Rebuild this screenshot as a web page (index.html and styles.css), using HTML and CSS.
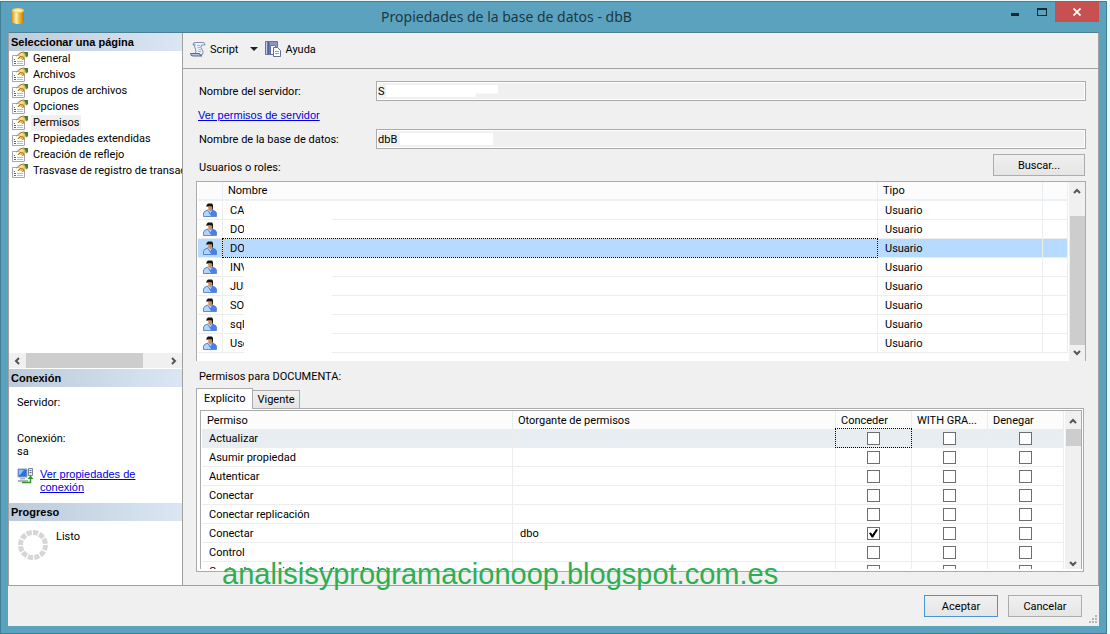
FILE: index.html
```html
<!DOCTYPE html>
<html lang="es">
<head>
    <meta charset="UTF-8">
    <meta name="viewport" content="width=device-width, initial-scale=1.0">
    <title>Propiedades de la base de datos - dbB</title>
    <link rel="stylesheet" href="styles.css">
</head>
<body>
    <!-- Iconos compartidos -->
    <svg class="sprite" aria-hidden="true">
        <symbol id="icon-page" viewBox="0 0 16 16">
            <path d="M.5 4.500h12v10H.5z" fill="#fff" stroke="#a3a9b4"/>
            <path d="M2 8.500h1M2 10.500h2M2 12.500h2" stroke="#4b66c8"/>
            <path d="M5 10.500h6M5 12.500h6" stroke="#b4bdd8"/>
            <path d="M4.500 5L8 2l3-1 3 1 .500 3.500L12 7l-1.500 2L8 7.500 5.500 8 7 5z" fill="#f0c04c"/>
            <path d="M4.500 5L8 2l3-1 2 .500M6 8l3-3 3 2-1.500 2" fill="none" stroke="#8a6c28" stroke-width=".8"/>
            <path d="M7 4l3-2 2 2-2 1z" fill="#ffe48c"/>
            <path d="M12 1h4v4l-1.500 1.500z" fill="#4c7a44"/>
        </symbol>
        <symbol id="icon-user" viewBox="0 0 14 14">
            <path d="M.5 13.500V10q.5-2 4-3h5q3.500 1 4 3v3.500z" fill="#4a80ee" stroke="#3464c8" stroke-width=".6"/>
            <path d="M1 13V10q.5-1.500 3.500-2.500L8 13z" fill="#b4d4ff"/>
            <path d="M5 7h4l-1.500 3z" fill="#eef5ff"/>
            <path d="M5 3h4.500v3.500L8 8.500H7L5.500 6.500z" fill="#c4905c"/>
            <path d="M3.500 4V2L5 .5h4L10 2v4l-.8 1L9 3.500 6 3z" fill="#17130f"/>
        </symbol>
        <symbol id="icon-up" viewBox="0 0 8 6"><path d="M1 5l3-3 3 3" fill="none" stroke="#555" stroke-width="2"/></symbol>
        <symbol id="icon-down" viewBox="0 0 8 6"><path d="M1 1l3 3 3-3" fill="none" stroke="#555" stroke-width="2"/></symbol>
        <symbol id="icon-left" viewBox="0 0 6 8"><path d="M5 1L2 4l3 3" fill="none" stroke="#555" stroke-width="2"/></symbol>
        <symbol id="icon-right" viewBox="0 0 6 8"><path d="M1 1l3 3-3 3" fill="none" stroke="#555" stroke-width="2"/></symbol>
    </svg>

    <div class="window">
        <header class="titlebar">
            <svg class="db-icon" width="12" height="16" viewBox="0 0 12 16">
                <defs>
                    <linearGradient id="gold"><stop offset="0" stop-color="#d89a16"/><stop offset=".35" stop-color="#fff0b0"/><stop offset=".6" stop-color="#f0bc3c"/><stop offset="1" stop-color="#b87a0c"/></linearGradient>
                </defs>
                <path d="M0 2.500v11C0 15 3 16 6 16s6-1 6-2.500v-11z" fill="url(#gold)"/>
                <ellipse cx="6" cy="2.500" rx="6" ry="2.500" fill="#f4d060"/>
                <ellipse cx="6" cy="2.500" rx="4" ry="1.300" fill="#fff0b8"/>
            </svg>
            <h1>Propiedades de la base de datos - dbB</h1>
            <button type="button" class="win-btn" aria-label="Minimizar"><span class="min-mark"></span></button>
            <button type="button" class="win-btn" aria-label="Maximizar"><span class="max-mark"></span></button>
            <button type="button" class="win-btn win-close" aria-label="Cerrar">
                <svg width="8" height="8" viewBox="0 0 8 8"><path d="M.5.5l7 7M7.500.5l-7 7" stroke="#fff" stroke-width="1.800"/></svg>
            </button>
        </header>

        <div class="client">
            <aside class="sidebar">
                <h2>Seleccionar una página</h2>
                <ul class="pages">
                    <li><svg><use href="#icon-page"/></svg><span>General</span></li>
                    <li><svg><use href="#icon-page"/></svg><span>Archivos</span></li>
                    <li><svg><use href="#icon-page"/></svg><span>Grupos de archivos</span></li>
                    <li><svg><use href="#icon-page"/></svg><span>Opciones</span></li>
                    <li class="active"><svg><use href="#icon-page"/></svg><span>Permisos</span></li>
                    <li><svg><use href="#icon-page"/></svg><span>Propiedades extendidas</span></li>
                    <li><svg><use href="#icon-page"/></svg><span>Creación de reflejo</span></li>
                    <li><svg><use href="#icon-page"/></svg><span>Trasvase de registro de transacciones</span></li>
                </ul>
                <div class="hscroll">
                    <svg width="6" height="8"><use href="#icon-left"/></svg>
                    <div class="hthumb"></div>
                    <svg width="6" height="8"><use href="#icon-right"/></svg>
                </div>

                <h2>Conexión</h2>
                <div class="connection">
                    <p class="server">Servidor:</p>
                    <p>Conexión:</p>
                    <p>sa</p>
                    <div class="conn-link">
                        <svg width="17" height="16" viewBox="0 0 17 16">
                            <path d="M1 1h9v8H1z" fill="#2f6fd8" stroke="#8fa4c4"/>
                            <path d="M2 2h5L3 7H2z" fill="#8cc0ff"/>
                            <path d="M3 10h5v1.500H3zM1 12h10v2H1z" fill="#aab4c4"/>
                            <path d="M11.500.5h4v7h-4z" fill="#e4e8ee" stroke="#7d8797"/>
                            <path d="M12.500 2.500h2M12.500 4.500h2" stroke="#687080"/>
                            <path d="M5 14.500h8.500V10" fill="none" stroke="#2f9a20" stroke-width="1.500"/>
                            <path d="M10.500 11l3-3.500 3 3.500z" fill="#2f9a20"/>
                        </svg>
                        <a href="#">Ver propiedades de conexión</a>
                    </div>
                </div>

                <h2>Progreso</h2>
                <div class="progress">
                    <svg width="30" height="30" viewBox="0 0 30 30">
                        <circle cx="15" cy="15" r="12.500" fill="none" stroke="#d6d6d6" stroke-width="5" pathLength="120" stroke-dasharray="8 2"/>
                    </svg>
                    <span>Listo</span>
                </div>
            </aside>

            <main class="main">
                <div class="toolbar">
                    <button type="button" class="tool">
                        <svg width="16" height="16" viewBox="0 0 16 16">
                            <path d="M4.500 1.500H13q2 0 2 2.500h-3.500q-1.500 2 .5 4.500t.5 5H3.500q4-2 2-5.500T4.500 1.500z" fill="#eaf1fb" stroke="#7f90b4"/>
                            <path d="M5 1.500q-2.500.5-2 2.500h2.500" fill="#c6d4ea" stroke="#7f90b4"/>
                            <path d="M.5 12.500h9q0 2.500 2.500 2.500H3Q.5 15 .5 12.500z" fill="#b8c6de" stroke="#5a6a8c"/>
                            <path d="M7 4.500h3M7.500 6.500h3M8.500 8.500h3M8 10.500h3" stroke="#a6b8d8"/>
                        </svg>
                        <span>Script</span>
                        <i class="caret"></i>
                    </button>
                    <button type="button" class="tool">
                        <svg width="16" height="16" viewBox="0 0 16 16">
                            <path d="M.5.5h12v13H.5z" fill="#8c98c4" stroke="#6672a4"/>
                            <path d="M3.500 1v12" stroke="#525e94" stroke-width="2"/>
                            <path d="M1.500 1v12" stroke="#c4cee8"/>
                            <path d="M5.500 4.500h4l2 2v7h-6z" fill="#f4f7ff" stroke="#61719c"/>
                            <path d="M8.500 6.500h4l3 3v6h-7z" fill="#fff" stroke="#61719c"/>
                            <path d="M10 10.500h4M10 12.500h4" stroke="#8f9dc4"/>
                        </svg>
                        <span>Ayuda</span>
                    </button>
                </div>

                <form class="content">
                    <div class="field">
                        <label for="server-name">Nombre del servidor:</label>
                        <div class="field-box">
                            <input type="text" id="server-name" value="S" readonly>
                            <span class="blank blank-server"></span>
                        </div>
                    </div>
                    <a href="#" class="perm-link">Ver permisos de servidor</a>
                    <div class="field">
                        <label for="db-name">Nombre de la base de datos:</label>
                        <div class="field-box">
                            <input type="text" id="db-name" value="dbB" readonly>
                            <span class="blank blank-db"></span>
                        </div>
                    </div>

                    <div class="users-head">
                        <span id="users-label">Usuarios o roles:</span>
                        <button type="button" class="btn btn-search">Buscar...</button>
                    </div>
                    <div class="list users">
                        <table aria-labelledby="users-label">
                            <colgroup><col class="c-icon"><col><col class="c-type"><col class="c-rest"></colgroup>
                            <thead>
                                <tr><th></th><th>Nombre</th><th>Tipo</th><th></th></tr>
                            </thead>
                            <tbody>
                                <tr><td><svg><use href="#icon-user"/></svg></td><td><span class="name">CA</span><i class="erased"></i></td><td>Usuario</td><td></td></tr>
                                <tr><td><svg><use href="#icon-user"/></svg></td><td><span class="name">DO</span><i class="erased"></i></td><td>Usuario</td><td></td></tr>
                                <tr class="selected"><td><svg><use href="#icon-user"/></svg></td><td><span class="name">DO</span></td><td>Usuario</td><td></td></tr>
                                <tr><td><svg><use href="#icon-user"/></svg></td><td><span class="name">INV</span><i class="erased"></i></td><td>Usuario</td><td></td></tr>
                                <tr><td><svg><use href="#icon-user"/></svg></td><td><span class="name">JUS</span><i class="erased"></i></td><td>Usuario</td><td></td></tr>
                                <tr><td><svg><use href="#icon-user"/></svg></td><td><span class="name">SO</span><i class="erased"></i></td><td>Usuario</td><td></td></tr>
                                <tr><td><svg><use href="#icon-user"/></svg></td><td><span class="name">sqls</span><i class="erased"></i></td><td>Usuario</td><td></td></tr>
                                <tr><td><svg><use href="#icon-user"/></svg></td><td><span class="name">Use</span><i class="erased"></i></td><td>Usuario</td><td></td></tr>
                            </tbody>
                        </table>
                        <div class="vscroll">
                            <svg width="8" height="6"><use href="#icon-up"/></svg>
                            <div class="vthumb"></div>
                            <svg width="8" height="6"><use href="#icon-down"/></svg>
                        </div>
                    </div>

                    <p class="perms-label" id="perms-label">Permisos para DOCUMENTA:</p>
                    <div class="tabs">
                        <button type="button" class="tab active">Explícito</button>
                        <button type="button" class="tab">Vigente</button>
                    </div>
                    <div class="tab-pane">
                        <div class="list perms">
                            <table aria-labelledby="perms-label">
                                <colgroup><col class="c-perm"><col><col class="c-check"><col class="c-check"><col class="c-check"></colgroup>
                                <thead>
                                    <tr><th>Permiso</th><th>Otorgante de permisos</th><th>Conceder</th><th>WITH GRA...</th><th>Denegar</th></tr>
                                </thead>
                                <tbody>
                                    <tr class="current"><td>Actualizar</td><td></td><td class="focus"><input type="checkbox" aria-label="Conceder Actualizar"></td><td><input type="checkbox" aria-label="WITH GRANT Actualizar"></td><td><input type="checkbox" aria-label="Denegar Actualizar"></td></tr>
                                    <tr><td>Asumir propiedad</td><td></td><td><input type="checkbox" aria-label="Conceder Asumir propiedad"></td><td><input type="checkbox" aria-label="WITH GRANT Asumir propiedad"></td><td><input type="checkbox" aria-label="Denegar Asumir propiedad"></td></tr>
                                    <tr><td>Autenticar</td><td></td><td><input type="checkbox" aria-label="Conceder Autenticar"></td><td><input type="checkbox" aria-label="WITH GRANT Autenticar"></td><td><input type="checkbox" aria-label="Denegar Autenticar"></td></tr>
                                    <tr><td>Conectar</td><td></td><td><input type="checkbox" aria-label="Conceder Conectar"></td><td><input type="checkbox" aria-label="WITH GRANT Conectar"></td><td><input type="checkbox" aria-label="Denegar Conectar"></td></tr>
                                    <tr><td>Conectar replicación</td><td></td><td><input type="checkbox" aria-label="Conceder Conectar replicación"></td><td><input type="checkbox" aria-label="WITH GRANT Conectar replicación"></td><td><input type="checkbox" aria-label="Denegar Conectar replicación"></td></tr>
                                    <tr><td>Conectar</td><td>dbo</td><td><input type="checkbox" aria-label="Conceder Conectar (dbo)" checked></td><td><input type="checkbox" aria-label="WITH GRANT Conectar (dbo)"></td><td><input type="checkbox" aria-label="Denegar Conectar (dbo)"></td></tr>
                                    <tr><td>Control</td><td></td><td><input type="checkbox" aria-label="Conceder Control"></td><td><input type="checkbox" aria-label="WITH GRANT Control"></td><td><input type="checkbox" aria-label="Denegar Control"></td></tr>
                                    <tr><td>Copia de seguridad de la base de datos</td><td></td><td><input type="checkbox" aria-label="Conceder Copia de seguridad"></td><td><input type="checkbox" aria-label="WITH GRANT Copia de seguridad"></td><td><input type="checkbox" aria-label="Denegar Copia de seguridad"></td></tr>
                                </tbody>
                            </table>
                            <div class="vscroll">
                                <svg width="8" height="6"><use href="#icon-up"/></svg>
                                <div class="vthumb"></div>
                                <svg width="8" height="6"><use href="#icon-down"/></svg>
                            </div>
                        </div>
                        <div class="watermark">analisisyprogramacionoop.blogspot.com.es</div>
                    </div>
                </form>
            </main>
        </div>

        <footer class="footer">
            <button type="button" class="btn btn-default">Aceptar</button>
            <button type="button" class="btn">Cancelar</button>
            <svg class="grip" width="9" height="9" viewBox="0 0 9 9">
                <path d="M6 0h2v2H6zM3 3h2v2H3zM6 3h2v2H6zM0 6h2v2H0zM3 6h2v2H3zM6 6h2v2H6z" fill="#b8b8b8"/>
            </svg>
        </footer>
    </div>
</body>
</html>
```

FILE: styles.css
```css
* {
    box-sizing: border-box;
}
body {
    margin: 0;
    padding: 1px 3px 1px 0;
    background: #e9f8fb;
    font-family: Roboto, "Liberation Sans", Arial, sans-serif;
    font-size: 11px;
    line-height: 13px;
    color: #000;
}
p, h1, h2, ul {
    margin: 0;
    padding: 0;
}
button, input {
    font: inherit;
    color: inherit;
}
a {
    color: #0000e0;
    font-family: "Liberation Sans", Arial, sans-serif;
}
.sprite {
    position: absolute;
    width: 0;
    height: 0;
}

/* Ventana */
.window {
    border: 1px solid #417e96;
    background: #5ba2bf;
    padding: 0 7px 7px;
}
.titlebar {
    display: flex;
    height: 30px;
    padding-left: 4px;
    align-items: flex-start;
}
.db-icon {
    margin-top: 6px;
}
.titlebar h1 {
    flex: 1;
    padding: 5px 12px 0 0;
    font-family: "Noto Sans", "Open Sans", sans-serif;
    font-size: 14px;
    font-weight: normal;
    line-height: 20px;
    text-align: center;
    color: #1d3843;
}
.win-btn {
    display: flex;
    width: 27px;
    height: 20px;
    padding: 0;
    border: none;
    background: none;
    align-items: center;
    justify-content: center;
}
.win-close {
    width: 44px;
    background: #c75050;
}
.min-mark {
    width: 8px;
    height: 3px;
    margin-top: 4px;
    background: #1b2a30;
}
.max-mark {
    width: 10px;
    height: 8px;
    border: 1px solid #1b2a30;
    border-top-width: 2px;
}

.client {
    display: flex;
    border: 1px solid #a0a0a0;
    border-top-color: #4a7f93;
    background: #f0f0f0;
}

/* Panel izquierdo */
.sidebar {
    display: flex;
    flex-direction: column;
    width: 174px;
    flex-shrink: 0;
    border-right: 1px solid #a0a0a0;
    background: #fff;
}
.sidebar h2 {
    height: 18px;
    padding-left: 2px;
    background: linear-gradient(to right, #bccbda, #dae6f3);
    font-family: "Liberation Sans", Arial, sans-serif;
    font-size: 11px;
    line-height: 18px;
    white-space: nowrap;
}
.pages {
    flex: 1;
    overflow: hidden;
    list-style: none;
}
.pages li {
    display: flex;
    height: 16px;
    padding-left: 3px;
    line-height: 16px;
    white-space: nowrap;
}
.pages svg {
    width: 16px;
    height: 16px;
    margin-right: 3px;
    flex-shrink: 0;
}
.pages span {
    padding: 0 2px;
}
.pages .active span {
    background: #f0f0f0;
}
.hscroll {
    display: flex;
    height: 15px;
    margin-bottom: 1px;
    padding: 0 5px;
    align-items: center;
    justify-content: space-between;
    background: #f0f0f0;
}
.hthumb {
    width: 117px;
    height: 15px;
    margin-right: 22px;
    background: #cdcdcd;
}
.connection {
    height: 116px;
    padding: 9px 8px;
}
.server {
    margin-bottom: 23px;
}
.conn-link {
    display: flex;
    gap: 6px;
    margin-top: 10px;
}
.conn-link a {
    flex: 1;
}
.conn-link svg {
    flex-shrink: 0;
}
.progress {
    display: flex;
    gap: 8px;
    height: 64px;
    padding: 9px;
}

/* Barra de herramientas */
.main {
    flex: 1;
    min-width: 0;
}
.toolbar {
    display: flex;
    gap: 7px;
    height: 36px;
    padding: 0 7px 3px;
    align-items: center;
    border-bottom: 1px solid #a0a0a0;
}
.tool {
    display: flex;
    gap: 4px;
    padding: 0;
    border: none;
    background: none;
    align-items: center;
}
.caret {
    margin-left: 8px;
    border: 4px solid transparent;
    border-top-color: #222;
    border-bottom: none;
}

/* Contenido */
.content {
    padding: 12px 12px 13px 13px;
}
.field {
    display: flex;
    padding-left: 3px;
    align-items: center;
}
.field label {
    width: 177px;
}
.field-box {
    position: relative;
    flex: 1;
}
.field input {
    display: block;
    width: 100%;
    height: 20px;
    padding: 0 1px;
    border: 1px solid #ababab;
    outline: none;
    background: #f0f0f0;
    box-shadow: inset 0 0 0 1px #fff;
}
.blank {
    position: absolute;
    top: 4px;
    height: 12px;
    background: #fff;
}
.blank-server {
    left: 10px;
    width: 112px;
    clip-path: polygon(0 0, 100% 0, 100% 70%, 80% 70%, 80% 100%, 0 100%);
}
.blank-db {
    left: 24px;
    width: 93px;
}
.perm-link {
    display: block;
    width: max-content;
    margin: 8px 0 7px 2px;
    font-size: 11px;
}
.users-head {
    display: flex;
    margin: 5px 1px 5px 3px;
    justify-content: space-between;
    align-items: center;
}
.users-head span {
    padding-top: 5px;
}
.btn {
    width: 74px;
    height: 22px;
    padding: 0;
    border: 1px solid #acacac;
    background: linear-gradient(#f0f0f0, #e5e5e5);
}
.btn-search {
    width: 92px;
}
.btn-default {
    border-color: #4a94dc;
}

/* Listas */
.list {
    display: flex;
    gap: 1px;
    overflow: hidden;
    background: #fff;
    border: 1px solid #ababab;
    border-bottom: none;
    padding-left: 1px;
}
.list table {
    flex: 1;
    align-self: flex-start;
    table-layout: fixed;
    border-spacing: 0;
}
.list th {
    height: 18px;
    padding: 0 5px;
    border-right: 1px solid #e6edf5;
    background: #fcfcfc;
    font-weight: normal;
    text-align: left;
    white-space: nowrap;
}
.list td {
    position: relative;
    height: 19px;
    padding: 0 7px;
    border-right: 1px solid #ededed;
    border-bottom: 1px solid #ededed;
    white-space: nowrap;
}
.users {
    height: 180px;
}
.users th {
    height: 19px;
    border-bottom: 2px solid #edf1f5;
}
.users td:first-child {
    padding: 0 0 0 5px;
}
.users td svg {
    display: block;
    width: 14px;
    height: 14px;
}
.c-icon {
    width: 25px;
}
.c-type {
    width: 165px;
}
.c-rest {
    width: 25px;
}
.name {
    display: block;
    width: 14px;
    overflow: hidden;
}
/* zona en blanco detrás del nombre recortado */
.erased {
    position: absolute;
    top: 0;
    bottom: -1px;
    left: 21px;
    width: 88px;
    background: #fff;
}
.selected td {
    background: #b7dbff;
}
.selected td:nth-child(2)::after,
.focus::after {
    content: "";
    position: absolute;
    inset: -1px;
    border: 1px dotted #000;
}
.vscroll {
    display: flex;
    flex-direction: column;
    width: 16px;
    padding: 6px 0 5px;
    align-items: center;
    justify-content: space-between;
    background: #f0f0f0;
}
.vthumb {
    width: 15px;
    height: 129px;
    margin-top: 16px;
    background: #cdcdcd;
}

/* Pestañas */
.perms-label {
    margin: 9px 3px 5px;
}
.tabs {
    display: flex;
    align-items: flex-end;
}
.tab {
    height: 18px;
    padding: 0 4px;
    border: 1px solid #acacac;
    border-left: none;
    border-bottom: none;
    background: linear-gradient(#f0f0f0, #e5e5e5);
}
.tab.active {
    height: 21px;
    margin-bottom: -1px;
    padding: 0 7px 1px;
    border-left: 1px solid #acacac;
    background: #fff;
    z-index: 1;
}
.tab-pane {
    position: relative;
    z-index: 0;
    margin-right: 2px;
    padding: 1px 1px 2px 3px;
    border: 1px solid #acacac;
    background: #fff;
}
.perms {
    height: 159px;
}
.perms .vscroll {
    padding: 7px 0 2px;
}
.perms .vthumb {
    height: 17px;
    margin: 0 0 110px;
}
.c-perm {
    width: 311px;
}
.c-check {
    width: 76px;
}
.current td {
    background: #e8edf1;
}
.perms td:nth-child(n+3) {
    padding: 0;
}
.perms input {
    appearance: none;
    display: block;
    width: 13px;
    height: 13px;
    margin: 1px auto 0;
    border: 1px solid #6e6e6e;
    background: #fff;
}
.perms input:checked::before {
    content: "";
    display: block;
    width: 9px;
    height: 9px;
    margin: 1px;
    background: #000;
    clip-path: polygon(0 45%, 20% 40%, 38% 60%, 80% 0, 100% 8%, 45% 95%, 30% 95%);
}
.watermark {
    position: absolute;
    top: 149px;
    left: 25px;
    font-family: "Liberation Sans", Arial, sans-serif;
    font-size: 29px;
    line-height: 32px;
    white-space: nowrap;
    color: #2eae52;
}

.footer {
    position: relative;
    z-index: -1;
    display: flex;
    gap: 10px;
    height: 40px;
    padding: 0 17px;
    align-items: center;
    justify-content: flex-end;
    background: #f0f0f0;
}
.window {
    position: relative;
    z-index: 0;
}
.grip {
    position: absolute;
    right: 1px;
    bottom: 2px;
}
```
